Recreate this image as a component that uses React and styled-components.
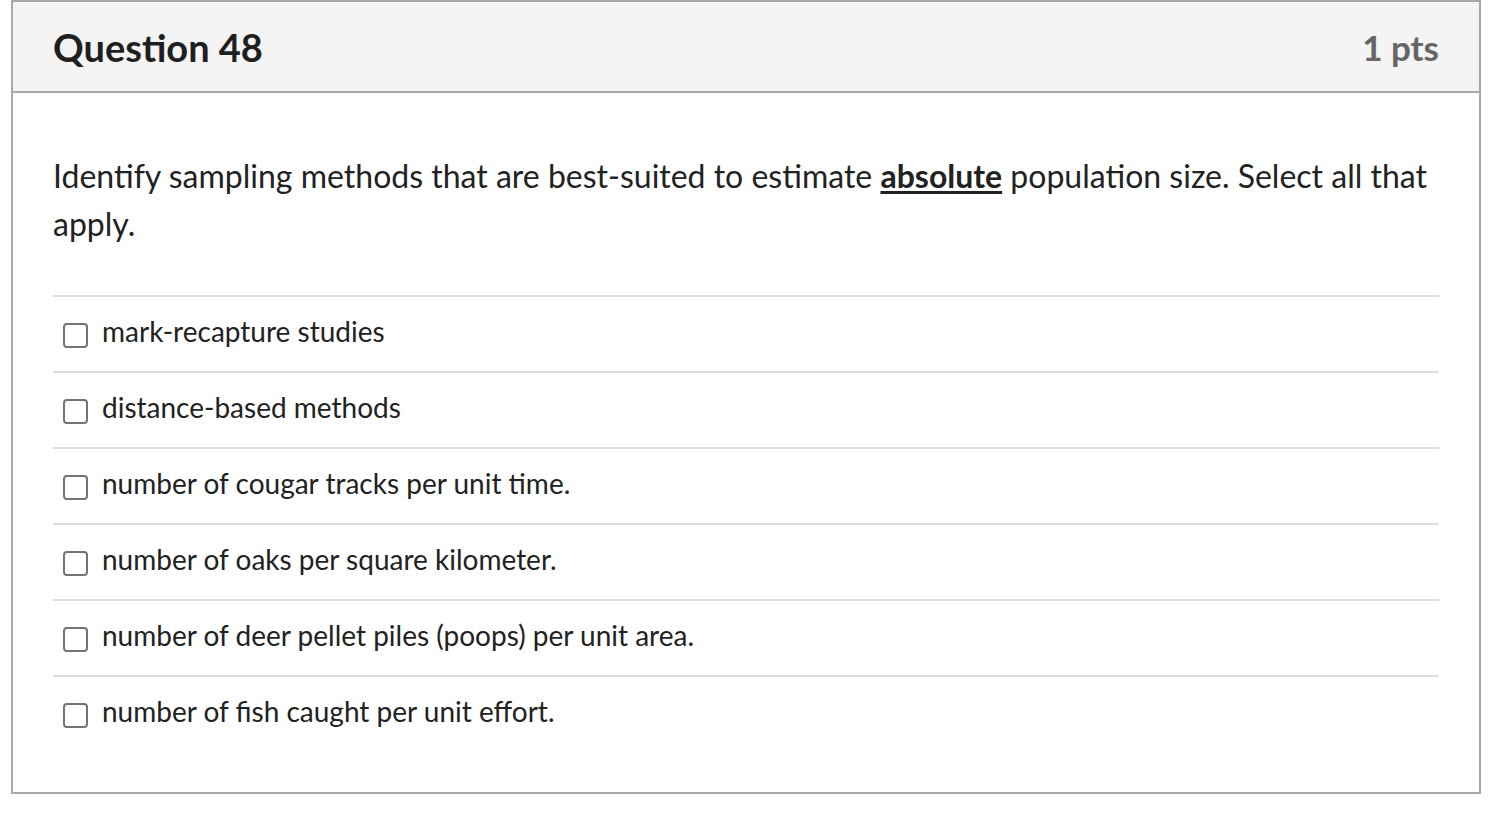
import React from "react";
import styled, { createGlobalStyle } from "styled-components";

const GlobalStyle = createGlobalStyle`
    body {
        margin: 0;
        background: #ffffff;
        font-family: Lato, "Noto Sans", sans-serif;
        color: #222222;
    }
`;

const Page = styled.div`
    padding: 0 19px 0 11px;
`;

const Card = styled.div`
    border: 2px solid #a8a8a8;
    background: #ffffff;
`;

const Header = styled.div`
    display: flex;
    align-items: center;
    justify-content: space-between;
    height: 89px;
    padding: 0 40px;
    background: #f4f4f4;
    border-bottom: 2px solid #a8a8a8;
`;

const Title = styled.h2`
    margin: 0;
    font-size: 38px;
    font-weight: 700;
    color: #1f1f1f;
`;

const Points = styled.span`
    font-size: 35px;
    font-weight: 700;
    color: #666666;
`;

const Body = styled.div`
    padding: 59px 40px 41px 40px;
`;

const Prompt = styled.p`
    margin: 0 0 47px 0;
    font-size: 32px;
    line-height: 48px;
    color: #222222;

    strong {
        font-weight: 700;
        text-decoration: underline;
        text-underline-offset: 3px;
    }
`;

const Answers = styled.div`
    display: flex;
    flex-direction: column;
`;

const Answer = styled.label`
    display: flex;
    align-items: center;
    gap: 14px;
    box-sizing: border-box;
    height: 76px;
    padding: 0 10px 6px 10px;
    border-top: 2px solid #dddddd;
    font-size: 28px;
    color: #222222;
`;

const Box = styled.span`
    flex: none;
    width: 21px;
    height: 21px;
    border: 2px solid #737373;
    border-radius: 4px;
    background: #ffffff;
    margin-top: 8px;
`;

const answers = [
    "mark-recapture studies",
    "distance-based methods",
    "number of cougar tracks per unit time.",
    "number of oaks per square kilometer.",
    "number of deer pellet piles (poops) per unit area.",
    "number of fish caught per unit effort.",
];

const App = () => (
    <>
        <GlobalStyle />
        <Page>
            <Card>
                <Header>
                    <Title>Question 48</Title>
                    <Points>1 pts</Points>
                </Header>
                <Body>
                    <Prompt>
                        Identify sampling methods that are best-suited to
                        estimate <strong>absolute</strong> population size.
                        Select all that apply.
                    </Prompt>
                    <Answers>
                        {answers.map((text) => (
                            <Answer key={text}>
                                <Box />
                                {text}
                            </Answer>
                        ))}
                    </Answers>
                </Body>
            </Card>
        </Page>
    </>
);

export default App;
